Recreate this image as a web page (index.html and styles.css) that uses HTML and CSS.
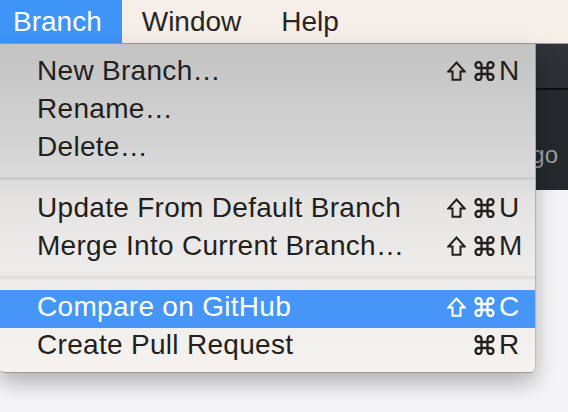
FILE: index.html
```html
<!DOCTYPE html>
<html>
<head>
<meta charset="utf-8">
<link rel="stylesheet" href="styles.css">
</head>
<body>
<div class="screen">
  <header class="menubar">
    <span class="mb-item mb-first active">Branch</span>
    <span class="mb-item">Window</span>
    <span class="mb-item">Help</span>
  </header>
  <main class="desk">
    <div class="app">
      <div class="toolbar"></div>
      <div class="panel"><span class="ago">ago</span></div>
      <div class="content"></div>
    </div>
    <div class="menu">
      <div class="row"><span class="label">New Branch…</span><span class="mods"><svg class="ico-shift" viewBox="0 0 20 21"><path d="M10 1.6 L18.6 11 H14.2 V19.6 H5.8 V11 H1.4 Z"/></svg><svg class="ico-cmd" viewBox="2 2 20 20"><path d="M18 3a3 3 0 0 0-3 3v12a3 3 0 0 0 3 3 3 3 0 0 0 3-3 3 3 0 0 0-3-3H6a3 3 0 0 0-3 3 3 3 0 0 0 3 3 3 3 0 0 0 3-3V6a3 3 0 0 0-3-3 3 3 0 0 0-3 3 3 3 0 0 0 3 3h12a3 3 0 0 0 3-3 3 3 0 0 0-3-3z"/></svg></span><span class="key">N</span></div>
      <div class="row"><span class="label">Rename…</span><span class="mods"></span><span class="key"></span></div>
      <div class="row"><span class="label">Delete…</span><span class="mods"></span><span class="key"></span></div>
      <div class="sep"></div>
      <div class="row"><span class="label">Update From Default Branch</span><span class="mods"><svg class="ico-shift" viewBox="0 0 20 21"><path d="M10 1.6 L18.6 11 H14.2 V19.6 H5.8 V11 H1.4 Z"/></svg><svg class="ico-cmd" viewBox="2 2 20 20"><path d="M18 3a3 3 0 0 0-3 3v12a3 3 0 0 0 3 3 3 3 0 0 0 3-3 3 3 0 0 0-3-3H6a3 3 0 0 0-3 3 3 3 0 0 0 3 3 3 3 0 0 0 3-3V6a3 3 0 0 0-3-3 3 3 0 0 0-3 3 3 3 0 0 0 3 3h12a3 3 0 0 0 3-3 3 3 0 0 0-3-3z"/></svg></span><span class="key">U</span></div>
      <div class="row"><span class="label">Merge Into Current Branch…</span><span class="mods"><svg class="ico-shift" viewBox="0 0 20 21"><path d="M10 1.6 L18.6 11 H14.2 V19.6 H5.8 V11 H1.4 Z"/></svg><svg class="ico-cmd" viewBox="2 2 20 20"><path d="M18 3a3 3 0 0 0-3 3v12a3 3 0 0 0 3 3 3 3 0 0 0 3-3 3 3 0 0 0-3-3H6a3 3 0 0 0-3 3 3 3 0 0 0 3 3 3 3 0 0 0 3-3V6a3 3 0 0 0-3-3 3 3 0 0 0-3 3 3 3 0 0 0 3 3h12a3 3 0 0 0 3-3 3 3 0 0 0-3-3z"/></svg></span><span class="key">M</span></div>
      <div class="sep sep-light"></div>
      <div class="row selected"><span class="label">Compare on GitHub</span><span class="mods"><svg class="ico-shift" viewBox="0 0 20 21"><path d="M10 1.6 L18.6 11 H14.2 V19.6 H5.8 V11 H1.4 Z"/></svg><svg class="ico-cmd" viewBox="2 2 20 20"><path d="M18 3a3 3 0 0 0-3 3v12a3 3 0 0 0 3 3 3 3 0 0 0 3-3 3 3 0 0 0-3-3H6a3 3 0 0 0-3 3 3 3 0 0 0 3 3 3 3 0 0 0 3-3V6a3 3 0 0 0-3-3 3 3 0 0 0-3 3 3 3 0 0 0 3 3h12a3 3 0 0 0 3-3 3 3 0 0 0-3-3z"/></svg></span><span class="key">C</span></div>
      <div class="row"><span class="label">Create Pull Request</span><span class="mods"><svg class="ico-cmd" viewBox="2 2 20 20"><path d="M18 3a3 3 0 0 0-3 3v12a3 3 0 0 0 3 3 3 3 0 0 0 3-3 3 3 0 0 0-3-3H6a3 3 0 0 0-3 3 3 3 0 0 0 3 3 3 3 0 0 0 3-3V6a3 3 0 0 0-3-3 3 3 0 0 0-3 3 3 3 0 0 0 3 3h12a3 3 0 0 0 3-3 3 3 0 0 0-3-3z"/></svg></span><span class="key">R</span></div>
    </div>
  </main>
</div>
</body>
</html>
```

FILE: styles.css
```css
html, body {
  margin: 0;
  padding: 0;
}
body {
  width: 568px;
  height: 412px;
  overflow: hidden;
  font-family: "Liberation Sans", Arial, sans-serif;
  background: #f5f5f7;
}
.screen {
  display: flex;
  flex-direction: column;
  height: 412px;
}
.menubar {
  display: flex;
  height: 43px;
  background: #f6efe9;
  border-bottom: 1px solid #a39c97;
}
.mb-item {
  font-size: 28px;
  line-height: 43px;
  color: #2a2522;
  padding: 0 20px;
}
.mb-first {
  padding-left: 13px;
}
.mb-item.active {
  background: #3e94f7;
  color: #ffffff;
}
.desk {
  position: relative;
  flex: 1;
}
.app {
  display: flex;
  flex-direction: column;
  height: 100%;
}
.toolbar {
  height: 44px;
  background: linear-gradient(#30333a, #2b2e33);
  border-bottom: 2px solid #0e0f10;
}
.panel {
  height: 100px;
  background: #25282c;
  display: flex;
  justify-content: flex-end;
  box-sizing: border-box;
  padding: 53px 10px 0 0;
}
.ago {
  font-size: 24px;
  line-height: 24px;
  color: #9ca0a6;
}
.content {
  flex: 1;
  background: #f5f5f7;
}
.menu {
  position: absolute;
  top: 0;
  left: -1px;
  width: 537px;
  height: 329px;
  box-sizing: border-box;
  padding-top: 10px;
  background: linear-gradient(#c3c3c3 0%, #d1d1d1 26%, #dcdcdc 43%, #e5e4e3 48%, #edebe9 66%, #f5f2ef 100%);
  border-right: 1px solid rgba(0, 0, 0, 0.22);
  border-bottom: 1px solid rgba(0, 0, 0, 0.22);
  border-radius: 0 0 6px 6px;
  box-shadow: 0 10px 22px rgba(0, 0, 0, 0.28);
}
.row {
  display: grid;
  grid-template-columns: 1fr auto 26px;
  column-gap: 3px;
  height: 38px;
  box-sizing: border-box;
  padding: 0 10px 0 38px;
  font-size: 28px;
  line-height: 34px;
  letter-spacing: 0.3px;
  color: #221f1d;
}
.row.selected {
  background: #4596f7;
  color: #ffffff;
}
.mods {
  display: flex;
  align-items: flex-start;
  justify-content: flex-end;
  gap: 7px;
  padding-top: 7px;
}
.mods svg {
  fill: none;
  stroke: currentColor;
  display: block;
}
.ico-shift {
  width: 19px;
  height: 20px;
  stroke-width: 2.1;
  stroke-linejoin: miter;
}
.ico-cmd {
  width: 23px;
  height: 20px;
  stroke-width: 2.3;
}
.key {
  text-align: left;
  letter-spacing: 0;
}
.sep {
  height: 3px;
  margin: 9px 0 11px;
  background: rgba(0, 0, 0, 0.07);
}
.sep-light {
  background: rgba(0, 0, 0, 0.06);
}
```
